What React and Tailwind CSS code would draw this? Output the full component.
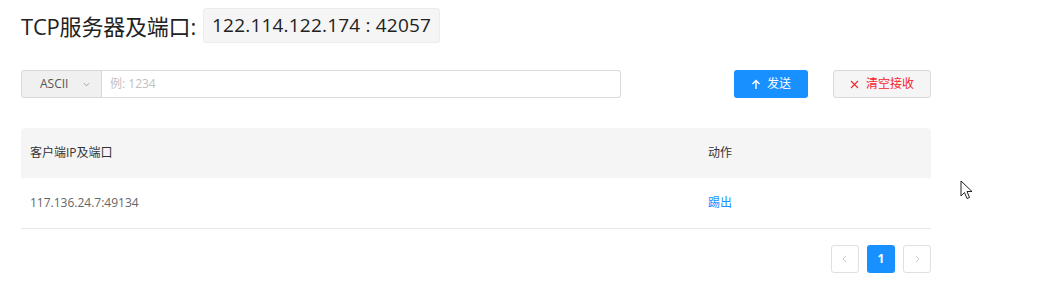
import React from "react";

const font = { fontFamily: '"Open Sans", "Noto Sans CJK SC", sans-serif' };

function Cursor() {
  return (
    <svg
      className="absolute left-[960px] top-[180px]"
      width="16"
      height="22"
      viewBox="0 0 16 22"
    >
      <path
        d="M1 1 L1 16 L4.5 12.5 L7 18.5 L9.5 17.5 L7 11.5 L12 11.5 Z"
        fill="#fff"
        stroke="#222"
        strokeWidth="1"
        strokeLinejoin="round"
      />
    </svg>
  );
}

function App() {
  return (
    <div className="relative w-[1039px] h-[282px] bg-white text-[#333]" style={font}>
      <div className="w-[910px] ml-[21px] pt-[8px]">
        {/* Title */}
        <div className="flex items-center gap-[7px] h-[35px]">
          <h1 className="text-[22px] text-[#222] leading-none tracking-[-0.2px]">TCP服务器及端口:</h1>
          <div className="h-[35px] px-[8px] flex items-center bg-[#f5f5f5] border border-[#ececec] rounded-[3px] text-[19px] text-[#222] tracking-[0.2px]">
            122.114.122.174 : 42057
          </div>
        </div>

        {/* Input row */}
        <div className="flex items-center mt-[27px] h-[28px]">
          <div className="flex w-[600px] h-[28px] text-[12px]">
            <div className="w-[81px] flex items-center justify-between pl-[18px] pr-[10px] bg-[#f0f0f0] border border-[#d9d9d9] rounded-l-[3px] text-[#555]">
              <span>ASCII</span>
              <svg width="9" height="9" viewBox="0 0 10 10">
                <path d="M2 3.5 L5 6.5 L8 3.5" fill="none" stroke="#999" strokeWidth="1" />
              </svg>
            </div>
            <input
              className="flex-1 px-[8px] border border-l-0 border-[#d9d9d9] rounded-r-[3px] outline-none text-[12px] placeholder:text-[#bfbfbf]"
              placeholder="例: 1234"
            />
          </div>
          <button className="ml-[113px] w-[74px] h-[28px] flex items-center justify-center gap-[6px] bg-[#1890ff] rounded-[3px] text-white text-[12px]">
            <svg width="10" height="11" viewBox="0 0 10 11">
              <path d="M5 10 V1.5 M1.5 5 L5 1.5 L8.5 5" fill="none" stroke="#fff" strokeWidth="1.4" />
            </svg>
            发送
          </button>
          <button className="ml-[25px] w-[98px] h-[28px] flex items-center justify-center gap-[7px] bg-[#f5f5f5] border border-[#d9d9d9] rounded-[3px] text-[#f5222d] text-[12px]">
            <svg width="9" height="9" viewBox="0 0 9 9">
              <path d="M1 1 L8 8 M8 1 L1 8" fill="none" stroke="#f5222d" strokeWidth="1.1" />
            </svg>
            清空接收
          </button>
        </div>

        {/* Table */}
        <div className="mt-[30px] text-[12px]">
          <div className="flex h-[50px] items-center bg-[#f5f5f5] rounded-t-[4px] text-[#333]">
            <div className="w-[678px] pl-[9px]">客户端IP及端口</div>
            <div className="flex-1 pl-[9px]">动作</div>
          </div>
          <div className="flex h-[51px] items-center border-b border-[#e8e8e8]">
            <div className="w-[678px] pl-[9px] text-[#666]">117.136.24.7:49134</div>
            <div className="flex-1 pl-[9px] text-[#1890ff]">踢出</div>
          </div>
        </div>

        {/* Pagination */}
        <div className="flex justify-end gap-[8px] mt-[16px]">
          <div className="w-[28px] h-[28px] flex items-center justify-center border border-[#e0e0e0] rounded-[3px]">
            <svg width="8" height="8" viewBox="0 0 8 8">
              <path d="M5 1 L2 4 L5 7" fill="none" stroke="#ccc" strokeWidth="1" />
            </svg>
          </div>
          <div className="w-[28px] h-[28px] flex items-center justify-center bg-[#1890ff] rounded-[3px] text-white text-[12px] font-bold">
            1
          </div>
          <div className="w-[28px] h-[28px] flex items-center justify-center border border-[#e0e0e0] rounded-[3px]">
            <svg width="8" height="8" viewBox="0 0 8 8">
              <path d="M3 1 L6 4 L3 7" fill="none" stroke="#ccc" strokeWidth="1" />
            </svg>
          </div>
        </div>
      </div>
      <Cursor />
    </div>
  );
}

export default App;
